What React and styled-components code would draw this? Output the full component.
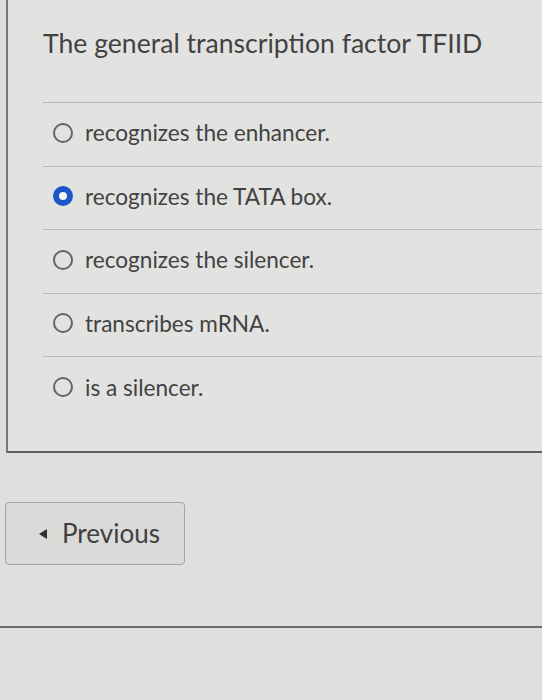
import React from "react";
import styled, { createGlobalStyle } from "styled-components";

const Global = createGlobalStyle`
  html, body { margin: 0; padding: 0; background: #dfe0dd; }
  body { font-family: Lato, "Open Sans", sans-serif; color: #3a3a3a; }
`;

const Page = styled.div`
  width: 542px;
  height: 700px;
  overflow: hidden;
  background: #dfe0dd;
`;

const Panel = styled.section`
  margin-left: 6px;
  border-left: 2px solid #77787a;
  border-bottom: 2px solid #5e5f60;
  padding: 0 0 30px 35px;
  background: #e2e3e1;
`;

const Heading = styled.h1`
  margin: 0;
  padding-top: 27px;
  height: 102px;
  box-sizing: border-box;
  font-size: 26.6px;
  font-weight: 400;
  color: #424242;
`;

const List = styled.div`
  border-top: 1px solid #b5b6b4;
`;

const Row = styled.label`
  display: flex;
  align-items: center;
  gap: 12px;
  height: 63.5px;
  box-sizing: border-box;
  padding: 0 0 3px 10px;
  border-bottom: ${(p) => (p.$last ? "none" : "1px solid #b9bab8")};
  font-size: 22.6px;
  color: #424242;
`;

const Radio = styled.span`
  width: 20px;
  height: 20px;
  box-sizing: border-box;
  border-radius: 50%;
  flex: none;
  border: ${(p) => (p.$on ? "6px solid #1d55c8" : "2px solid #636466")};
  background: ${(p) => (p.$on ? "#f4f4f4" : "transparent")};
`;

const Footer = styled.div`
  padding: 49px 0 0 5px;
  height: 175px;
  box-sizing: border-box;
  border-bottom: 2px solid #6a6b6c;
`;

const Button = styled.button`
  display: flex;
  align-items: center;
  gap: 15px;
  width: 180px;
  height: 63px;
  padding: 0 0 0 33px;
  box-sizing: border-box;
  background: #dadbd9;
  border: 1.5px solid #a3a4a3;
  border-radius: 4px;
  font-family: Lato, "Open Sans", sans-serif;
  font-size: 26px;
  color: #3f3f3f;
`;

const Tri = styled.span`
  width: 0;
  height: 0;
  border-top: 5px solid transparent;
  border-bottom: 5px solid transparent;
  border-right: 8px solid #2f2f2f;
  margin-top: 1px;
`;

const options = [
  "recognizes the enhancer.",
  "recognizes the TATA box.",
  "recognizes the silencer.",
  "transcribes mRNA.",
  "is a silencer.",
];

export default function App() {
  return (
    <Page>
      <Global />
      <Panel>
        <Heading>The general transcription factor TFIID</Heading>
        <List>
          {options.map((o, i) => (
            <Row key={o} $last={i === options.length - 1}>
              <Radio $on={i === 1} />
              {o}
            </Row>
          ))}
        </List>
      </Panel>
      <Footer>
        <Button>
          <Tri />
          Previous
        </Button>
      </Footer>
    </Page>
  );
}
